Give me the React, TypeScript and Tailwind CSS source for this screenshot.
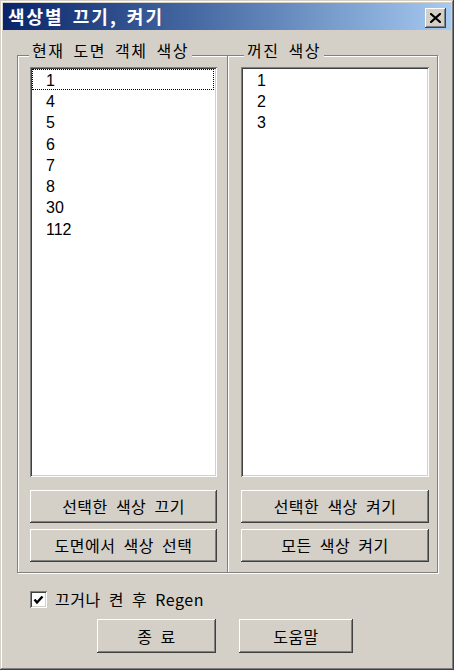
import React from "react";

const raised =
  "shadow-[inset_-1px_-1px_0_#404040,inset_1px_1px_0_#ffffff,inset_-2px_-2px_0_#808080,inset_2px_2px_0_#d4d0c8]";

function Btn({ label, className }: { label: string; className: string }) {
  return (
    <div
      className={
        "flex items-center justify-center bg-[#d4d0c8] text-black text-[16px] tracking-[0.5px] [word-spacing:4px] leading-none pb-[1px] shadow-[inset_-1px_-1px_0_#404040,inset_1px_1px_0_#ffffff,inset_-2px_-2px_0_#808080,inset_2px_2px_0_#d4d0c8] " +
        className
      }
    >
      {label}
    </div>
  );
}

function ListBox({ items, focus, padLeft }: { items: string[]; focus: boolean; padLeft: string }) {
  return (
    <div className="h-[410px] bg-white p-[2px] shadow-[inset_1px_1px_0_#808080,inset_-1px_-1px_0_#ffffff,inset_2px_2px_0_#404040,inset_-2px_-2px_0_#d4d0c8]">
      <div className="flex flex-col pr-[1px]">
        {items.map((it, i) => (
          <div
            key={i}
            className={
              "h-[21.3px] pt-[2px] flex items-center font-['Liberation_Sans',Arial,sans-serif] text-[16px] leading-[16px] text-black border " +
              padLeft +
              (focus && i === 0 ? " border-dotted border-black" : " border-transparent")
            }
          >
            {it}
          </div>
        ))}
      </div>
    </div>
  );
}

export default function App() {
  return (
    <div className="w-[454px] h-[670px] bg-[#d4d0c8] p-[3px] flex flex-col font-['Noto_Sans_CJK_KR',sans-serif] text-black shadow-[inset_-1px_-1px_0_#404040,inset_1px_1px_0_#d4d0c8,inset_-2px_-2px_0_#808080,inset_2px_2px_0_#ffffff]">
      {/* Title bar */}
      <div className="h-[27px] flex items-center justify-between bg-linear-to-r from-[#0a246a] to-[#a6caf0] pl-[5px] pr-[5px]">
        <span className="text-white font-bold text-[18px] tracking-[2px] [word-spacing:3px] leading-none pb-[1px]">
          색상별 끄기, 켜기
        </span>
        <div className={"w-[21px] h-[20px] mt-[2px] bg-[#d4d0c8] flex items-center justify-center " + raised}>
          <svg width="11" height="10" viewBox="0 0 11 10">
            <path d="M1 1 L10 9 M10 1 L1 9" stroke="#000" strokeWidth="2.2" strokeLinecap="square" />
          </svg>
        </div>
      </div>

      {/* Body */}
      <div className="flex flex-col pt-[25px] pl-[14px]">
        <div className="flex">
          {/* Left group */}
          <div className="w-[211px] h-[518px] flex flex-col border border-[#808080] shadow-[1px_1px_0_#ffffff,inset_1px_1px_0_#ffffff] pl-[12px] pr-[10px] pb-[10px]">
            <div className="self-start -mt-[17px] -ml-[1px] h-[22px] flex items-center bg-[#d4d0c8] px-[3px] text-[16px] tracking-[1.5px] [word-spacing:4px] leading-none">
              현재 도면 객체 색상
            </div>
            <div className="mt-[6px]">
              <ListBox items={["1", "4", "5", "6", "7", "8", "30", "112"]} focus={true} padLeft="pl-[13px]" />
            </div>
            <Btn label="선택한 색상 끄기" className="mt-[13px] h-[33px]" />
            <Btn label="도면에서 색상 선택" className="mt-[6px] h-[33px]" />
          </div>

          {/* Right group */}
          <div className="w-[211px] h-[518px] -ml-[1px] flex flex-col border border-[#808080] shadow-[1px_1px_0_#ffffff,inset_1px_1px_0_#ffffff] pl-[13px] pr-[8px] pb-[10px]">
            <div className="self-start -mt-[17px] ml-[3px] h-[22px] flex items-center bg-[#d4d0c8] px-[3px] text-[16px] tracking-[1.5px] [word-spacing:4px] leading-none">
              꺼진 색상
            </div>
            <div className="mt-[6px]">
              <ListBox items={["1", "2", "3"]} focus={false} padLeft="pl-[13px]" />
            </div>
            <Btn label="선택한 색상 켜기" className="mt-[13px] h-[33px]" />
            <Btn label="모든 색상 켜기" className="mt-[6px] h-[33px]" />
          </div>
        </div>

        {/* Checkbox row */}
        <div className="mt-[18px] ml-[13px] flex items-center gap-[8px]">
          <div className="w-[17px] h-[17px] bg-white flex items-center justify-center shadow-[inset_1px_1px_0_#808080,inset_-1px_-1px_0_#ffffff,inset_2px_2px_0_#404040,inset_-2px_-2px_0_#d4d0c8]">
            <svg width="11" height="10" viewBox="0 0 11 10">
              <polyline points="1.5,4.5 4,7.5 9.5,1.5" fill="none" stroke="#000" strokeWidth="2.4" />
            </svg>
          </div>
          <span className="text-[16px] tracking-[0.5px] [word-spacing:4px] leading-none pb-[1px]">끄거나 켠 후 Regen</span>
        </div>

        {/* Bottom buttons */}
        <div className="mt-[11px] ml-[80px] flex gap-[23px]">
          <Btn label="종 료" className="w-[119px] h-[34px]" />
          <Btn label="도움말" className="w-[114px] h-[34px]" />
        </div>
      </div>
    </div>
  );
}
